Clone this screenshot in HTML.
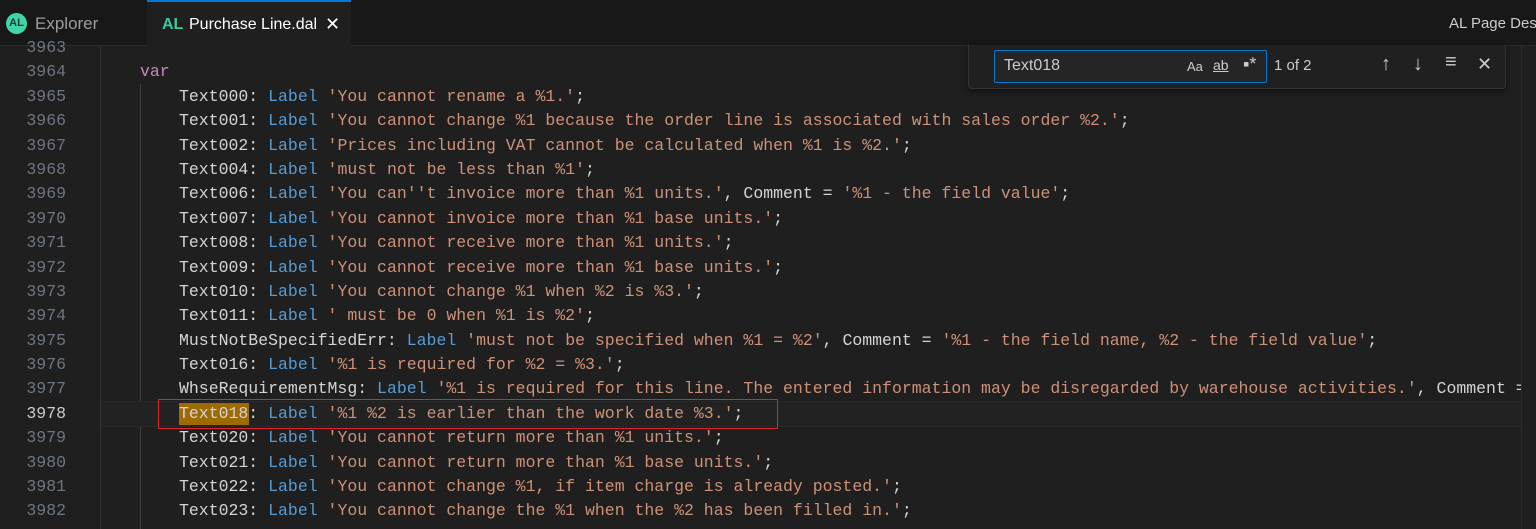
<!DOCTYPE html><html><head><style>
body{margin:0;width:1536px;height:529px;background:#1f1f1f;overflow:hidden;position:relative;font-family:"Liberation Sans",sans-serif}
.tabs{position:absolute;left:0;top:0;width:1536px;height:45px;background:#181818;border-bottom:1px solid #2b2b2b}
.tab{position:absolute;top:0;height:45px;font-size:16px;color:#9d9d9d;line-height:47px;white-space:nowrap}
.code{position:absolute;left:0;top:36px;width:1521px;height:493px;overflow:hidden;font-family:"Liberation Mono",monospace;font-size:16.5px}
.row{height:24.4px;line-height:24.4px;position:relative}
.ln{position:absolute;left:0;width:66px;text-align:right;color:#6e7681}
.tx{position:absolute;left:179px;color:#d4d4d4;white-space:pre}
.k{color:#569cd6}.s{color:#ce9178}
</style></head><body>
<div class="tabs">
 <div class="tab" style="left:0;width:146px"><span style="position:absolute;left:6px;top:13px;width:21px;height:21px;border-radius:50%;background:#3dd6a8;color:#1f3a30;font-size:11px;line-height:21px;text-align:center;font-weight:bold">AL</span><span style="position:absolute;left:35px;font-size:17px">Explorer</span></div>
 <div class="tab" style="left:147px;width:204px;background:#1f1f1f;border-top:2px solid #0078d4;height:44px;color:#fff;line-height:45px"><span style="position:absolute;left:15px;color:#3dc9a0;font-weight:bold">AL</span><span style="position:absolute;left:42px">Purchase Line.dal</span><span style="position:absolute;left:178px;font-size:18px">✕</span></div>
 <div class="tab" style="left:1449px;color:#ccc;font-size:15px">AL Page Designer</div>
</div>
<div style="position:absolute;left:0;top:46px;width:1536px;height:483px;overflow:hidden">
<div style="position:absolute;left:100px;top:0;width:1px;height:483px;background:#333"></div>
<div style="position:absolute;left:140px;top:38px;width:1px;height:445px;background:#404040"></div>
<div style="position:absolute;left:101px;top:355px;width:1420px;height:24px;border-top:1px solid #282828;border-bottom:1px solid #282828;background:#222"></div>
<div style="position:absolute;left:179px;top:357px;width:70px;height:22px;background:#9e6a03"></div>
<div style="position:absolute;left:158px;top:353px;width:618px;height:28px;border:1px solid #e0252a"></div>
<div style="position:absolute;left:1521px;top:0;width:1px;height:483px;background:#2b2b2b"></div>
</div>
<div class="code"><div class="row"><span class="ln">3963</span></div><div class="row"><span class="ln">3964</span><span class="tx" style="left:140px;color:#c586c0">var</span></div><div class="row"><span class="ln">3965</span><span class="tx">Text000: <span class="k">Label</span> <span class="s">'You cannot rename a %1.'</span>;</span></div><div class="row"><span class="ln">3966</span><span class="tx">Text001: <span class="k">Label</span> <span class="s">'You cannot change %1 because the order line is associated with sales order %2.'</span>;</span></div><div class="row"><span class="ln">3967</span><span class="tx">Text002: <span class="k">Label</span> <span class="s">'Prices including VAT cannot be calculated when %1 is %2.'</span>;</span></div><div class="row"><span class="ln">3968</span><span class="tx">Text004: <span class="k">Label</span> <span class="s">'must not be less than %1'</span>;</span></div><div class="row"><span class="ln">3969</span><span class="tx">Text006: <span class="k">Label</span> <span class="s">'You can''t invoice more than %1 units.'</span>, Comment = <span class="s">'%1 - the field value'</span>;</span></div><div class="row"><span class="ln">3970</span><span class="tx">Text007: <span class="k">Label</span> <span class="s">'You cannot invoice more than %1 base units.'</span>;</span></div><div class="row"><span class="ln">3971</span><span class="tx">Text008: <span class="k">Label</span> <span class="s">'You cannot receive more than %1 units.'</span>;</span></div><div class="row"><span class="ln">3972</span><span class="tx">Text009: <span class="k">Label</span> <span class="s">'You cannot receive more than %1 base units.'</span>;</span></div><div class="row"><span class="ln">3973</span><span class="tx">Text010: <span class="k">Label</span> <span class="s">'You cannot change %1 when %2 is %3.'</span>;</span></div><div class="row"><span class="ln">3974</span><span class="tx">Text011: <span class="k">Label</span> <span class="s">' must be 0 when %1 is %2'</span>;</span></div><div class="row"><span class="ln">3975</span><span class="tx">MustNotBeSpecifiedErr: <span class="k">Label</span> <span class="s">'must not be specified when %1 = %2'</span>, Comment = <span class="s">'%1 - the field name, %2 - the field value'</span>;</span></div><div class="row"><span class="ln">3976</span><span class="tx">Text016: <span class="k">Label</span> <span class="s">'%1 is required for %2 = %3.'</span>;</span></div><div class="row"><span class="ln">3977</span><span class="tx">WhseRequirementMsg: <span class="k">Label</span> <span class="s">'%1 is required for this line. The entered information may be disregarded by warehouse activities.'</span>, Comment = </span></div><div class="row"><span class="ln" style="color:#ccc">3978</span><span class="tx">Text018: <span class="k">Label</span> <span class="s">'%1 %2 is earlier than the work date %3.'</span>;</span></div><div class="row"><span class="ln">3979</span><span class="tx">Text020: <span class="k">Label</span> <span class="s">'You cannot return more than %1 units.'</span>;</span></div><div class="row"><span class="ln">3980</span><span class="tx">Text021: <span class="k">Label</span> <span class="s">'You cannot return more than %1 base units.'</span>;</span></div><div class="row"><span class="ln">3981</span><span class="tx">Text022: <span class="k">Label</span> <span class="s">'You cannot change %1, if item charge is already posted.'</span>;</span></div><div class="row"><span class="ln">3982</span><span class="tx">Text023: <span class="k">Label</span> <span class="s">'You cannot change the %1 when the %2 has been filled in.'</span>;</span></div></div>
<div style="position:absolute;left:968px;top:45px;width:536px;height:43px;background:#202020;border:1px solid #333;border-top:none;border-radius:0 0 4px 4px;box-shadow:0 2px 6px #0008;color:#ccc;font-size:16px">
 <div style="position:absolute;left:25px;top:5px;width:271px;height:31px;border:1px solid #0078d4;border-radius:2px;background:#252525"><span style="position:absolute;left:9px;top:6px">Text018</span><span style="position:absolute;left:192px;top:8px;font-size:13px">Aa</span><span style="position:absolute;left:218px;top:6px;font-size:14px;text-decoration:underline">ab</span><span style="position:absolute;left:248px;top:3px;font-size:18px">▪*</span></div>
 <span style="position:absolute;left:305px;top:12px;font-size:15px">1 of 2</span>
 <span style="position:absolute;left:412px;top:8px;font-size:20px">↑</span>
 <span style="position:absolute;left:444px;top:8px;font-size:20px">↓</span>
 <span style="position:absolute;left:476px;top:6px;font-size:20px">≡</span>
 <span style="position:absolute;left:508px;top:9px;font-size:18px">✕</span>
</div>
</body></html>
